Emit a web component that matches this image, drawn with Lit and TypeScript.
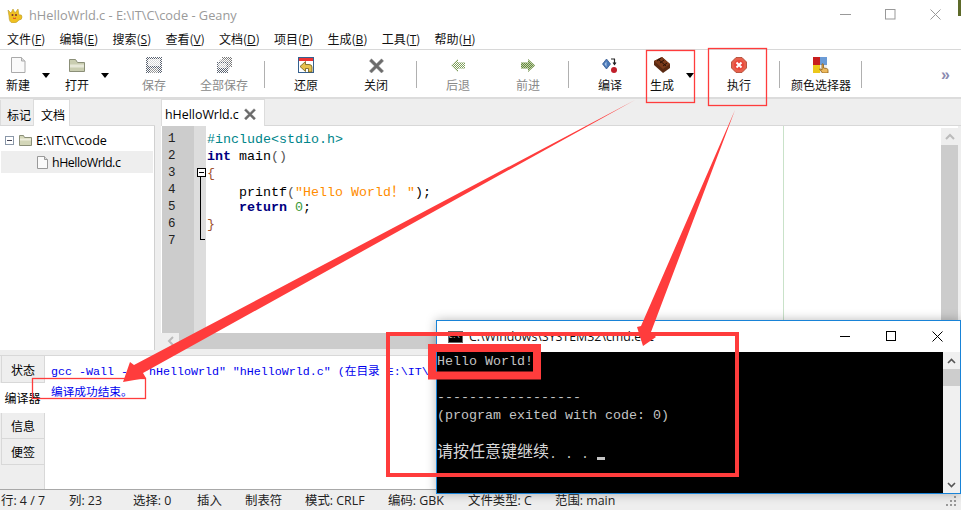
import { LitElement, html, css, svg } from "lit";
import { customElement } from "lit/decorators.js";

const ICONS: Record<string, any> = {
  page: svg`<path d="M.5.500h10l3.500 3.500v11.500H.5z" fill="#fafafa" stroke="#aaa"/><path d="M10.500.500v3.500h3.500" fill="#ddd" stroke="#aaa"/>`,
  folder: svg`<path d="M.5.500h6l2 3h7v9H.5z" fill="#c9cdb0" stroke="#8b8f78"/><path d="M1 7h14" stroke="#e7e8d8" stroke-width="3"/>`,
  save: svg`<rect x="0" y="0" width="16" height="16" fill="#5a6270"/><rect x="2" y="2" width="12" height="7" fill="#d8d8d8"/><rect x="4" y="11" width="8" height="5" fill="#999"/><rect width="16" height="16" fill="url(#dz)"/>`,
  saveall: svg`<rect x="5" y="0" width="10" height="10" fill="#777"/><rect x="2.500" y="2.500" width="10" height="10" fill="#aaa"/><rect x="0" y="5" width="11" height="11" fill="#5a6270"/><rect x="1.500" y="6" width="8" height="5" fill="#ccc"/><rect width="15" height="16" fill="url(#dz)"/>`,
  revert: svg`<rect x=".5" y=".5" width="15" height="15" fill="#fff" stroke="#36608f"/><rect x="1" y="1" width="14" height="3" fill="#e33"/><path d="M14 15V10Q14 7.500 11 7.500H7.500V4.500L2 9.500l5.500 5v-3h3V15z" fill="#e6c04c" stroke="#6b5a18" stroke-width=".8"/>`,
  close: svg`<path d="M3 1 9 7l6-6 2.500 2.500-6 6 6 6L15 18l-6-6-6 6-2.500-2.500 6-6-6-6z" fill="#6b6b6b" stroke="#8a8a8a" stroke-width=".6"/>`,
  back: svg`<path d="M0 6.500 7 0v3.500h7v6H7V13z" fill="#7f9f5a"/><path d="M0 6.500 7 0v3.500h7v6H7V13z" fill="url(#dz)"/>`,
  fwd: svg`<path d="M14 6.500 7 0v3.500H0v6h7V13z" fill="#668a3a"/><path d="M14 6.500 7 0v3.500H0v6h7V13z" fill="url(#dz)" opacity=".6"/>`,
  compile: svg`<path d="M.5 7l4-5 4 5-4 5z" fill="#4a79b8" stroke="#2b4f86" stroke-width=".7"/><path d="M2.500 7l2-2.500V10z" fill="#a8c4e6"/><circle cx="12" cy="13" r="3" fill="#c01f2a"/><path d="M9 2h4M12.500 2v5M11 5.500l1.500 2 1.500-2" stroke="#222" stroke-width="1.200" fill="none"/>`,
  brick: svg`<path d="M1 5 9 1l8 7v4l-7 5-9-8z" fill="#5a2a12"/><path d="M1 5 9 1l8 7-7 5z" fill="#7a3a1a"/><path d="M5 3l8 7M8 2l-4 3M11 4l-4 3M14 7l-4 3" stroke="#2b1206" stroke-width="1"/>`,
  stop: svg`<path d="M5 .5h6L15.500 5v6L11 15.500H5L.5 11V5z" fill="#e8604c" stroke="#a8412c" stroke-width=".8"/><circle cx="8" cy="8" r="5" fill="#e9463a"/><path d="M5.500 5.500l5 5M10.500 5.500l-5 5" stroke="#fff" stroke-width="2"/>`,
  color: svg`<rect x="0" y="0" width="7" height="8" fill="#c81e1e"/><rect x="7" y="0" width="7" height="8" fill="#6b9bd6"/><rect x="0" y="8" width="7" height="8" fill="#ecc81a"/><rect x="7" y="8" width="7" height="8" fill="#eee"/><path d="M9 7c1-.5 1.500 0 1.500 1v3l3 .5c1.500.5 1.500 1 1.500 2V16H9.500l-3-4 1 0 1.500 1z" fill="#edb95e" stroke="#8a5a16" stroke-width=".8"/>`,
};

function icon(name: string, w = 20, h = 20, vb = 0) {
  return html`<svg class="ic" width=${w} height=${h} viewBox="0 0 ${vb || w} ${vb || h}">${ICONS[name]}</svg>`;
}

type Tool =
  | { t: "tool"; label: string; w: number; ic: string; iw: number; ih: number; vb?: number; off?: boolean }
  | { t: "arrow"; w: number }
  | { t: "sep" }
  | { t: "gap"; w: number };

const TOOLS: Tool[] = [
  { t: "tool", label: "新建", w: 36, ic: "page", iw: 15, ih: 16 },
  { t: "arrow", w: 20 },
  { t: "tool", label: "打开", w: 42, ic: "folder", iw: 16, ih: 13 },
  { t: "arrow", w: 14 },
  { t: "gap", w: 7 },
  { t: "tool", label: "保存", w: 70, ic: "save", iw: 16, ih: 16, off: true },
  { t: "tool", label: "全部保存", w: 70, ic: "saveall", iw: 15, ih: 16, off: true },
  { t: "sep" },
  { t: "tool", label: "还原", w: 70, ic: "revert", iw: 16, ih: 16 },
  { t: "tool", label: "关闭", w: 70, ic: "close", iw: 15, ih: 15, vb: 18 },
  { t: "sep" },
  { t: "tool", label: "后退", w: 70, ic: "back", iw: 14, ih: 13, off: true },
  { t: "tool", label: "前进", w: 70, ic: "fwd", iw: 14, ih: 13, off: true },
  { t: "sep" },
  { t: "tool", label: "编译", w: 70, ic: "compile", iw: 16, ih: 16 },
  { t: "tool", label: "生成", w: 34, ic: "brick", iw: 18, ih: 18 },
  { t: "arrow", w: 21 },
  { t: "gap", w: 4 },
  { t: "tool", label: "执行", w: 70, ic: "stop", iw: 16, ih: 16 },
  { t: "sep" },
  { t: "tool", label: "颜色选择器", w: 70, ic: "color", iw: 16, ih: 16 },
  { t: "sep" },
];

const MENU = [
  ["文件", "F"], ["编辑", "E"], ["搜索", "S"], ["查看", "V"], ["文档", "D"],
  ["项目", "P"], ["生成", "B"], ["工具", "T"], ["帮助", "H"],
];

const STATUS: [string, number][] = [
  ["行: 4 / 7", 68], ["列: 23", 64], ["选择: 0", 64], ["插入", 48], ["制表符", 60],
  ["模式: CRLF", 83], ["编码: GBK", 80], ["文件类型: C", 87], ["范围: main", 100],
];

@customElement("app-root")
export class AppRoot extends LitElement {
  static styles = css`
    :host {
      display: block; position: relative; width: 961px; height: 510px; overflow: hidden;
      background: #fff; color: #000;
      font-family: "Open Sans", "Noto Sans CJK SC", sans-serif; font-size: 12px;
    }
    .app { display: flex; flex-direction: column; height: 510px; }
    .defs { position: absolute; width: 0; height: 0; }

    .title { height: 29px; flex: none; display: flex; align-items: center; background: #fff; position: relative; }
    .logo { margin: 0 6px 0 7px; flex: none; }
    .title-text { color: #9a9a9a; font-size: 12.8px; }
    .caps { margin-left: auto; display: flex; align-items: center; gap: 34px; padding-right: 20px; }
    .caps svg { display: block; }
    .corner { position: absolute; right: 0; top: 0; width: 3px; height: 16px; background: #5d6a2a; }

    .menu { height: 20px; flex: none; display: flex; padding-left: 7px; gap: 14.2px; border-bottom: 1px solid #d8d8d8; line-height: 19px; color: #111; font-family: "Noto Sans CJK SC", sans-serif; }
    .menu u { font-family: "Open Sans", sans-serif; }
    .menu span { white-space: nowrap; }

    .toolbar { height: 47px; flex: none; display: flex; border-bottom: 2px solid #dcdcdc; font-family: "Noto Sans CJK SC", sans-serif; }
    .tool { display: flex; flex-direction: column; align-items: center; flex: none; }
    .tool .ibox { height: 22px; margin-top: 4px; display: flex; align-items: center; justify-content: center; }
    .tool .lab { line-height: 18px; color: #111; white-space: nowrap; }
    .tool.off .lab { color: #8a8a8a; }
    .drop { flex: none; display: flex; justify-content: center; padding-top: 23px; box-sizing: border-box; }
    .drop i { display: block; width: 0; height: 0; border: 4px solid transparent; border-top: 5px solid #000; border-bottom: 0; }
    .sep { flex: none; width: 12px; box-sizing: border-box; padding: 11px 0 9px 5px; }
    .sep i { display: block; width: 1px; height: 100%; background: #b0b0b0; }
    .more { margin-left: auto; margin-right: 11px; padding-top: 16px; color: #8a8ab0; font: bold 16px "Liberation Sans", sans-serif; }

    .mid { flex: 1; display: flex; flex-direction: column; background: #eee; min-height: 0; }
    .upper { height: 251px; flex: none; display: flex; gap: 6px; }
    .side { width: 155px; flex: none; display: flex; flex-direction: column; }
    .tabs { height: 27px; flex: none; display: flex; align-items: flex-end; border-bottom: 1px solid #d8d8d8; box-sizing: border-box; font-family: "Noto Sans CJK SC", sans-serif; }
    .stab { width: 33px; height: 25px; line-height: 29px; box-sizing: border-box; border-left: 1px solid #dcdcdc; padding-left: 6px; white-space: nowrap; overflow: hidden; }
    .stab.on { width: 37px; height: 27px; background: #fff; line-height: 30px; margin-bottom: -1px; position: relative; border: 1px solid #dcdcdc; border-bottom: 0; padding-left: 7px; }
    .sbody { flex: 1; background: #fff; border-right: 1px solid #d0d0d0; padding-top: 3px; font-size: 12.6px; }
    .row { height: 22px; display: flex; align-items: center; white-space: nowrap; }
    .row.sel { background: #eee; margin: 0 1px; }
    .row svg { flex: none; }
    .row .fn { letter-spacing: -.45px; font-size: 12.4px; }
    .minus { margin: 0 5px; }
    .fold { margin-right: 4px; }
    .fileic { margin: 0 4px 0 36px; }

    .ed { flex: 1; display: flex; flex-direction: column; min-width: 0; }
    .etabs { height: 27px; flex: none; display: flex; align-items: flex-end; border-bottom: 1px solid #d8d8d8; box-sizing: border-box; }
    .etab { width: 104px; height: 27px; margin-bottom: -1px; background: #fff; border: 1px solid #dcdcdc; border-bottom: 0; box-sizing: border-box; display: flex; align-items: center; padding: 2px 0 0 3px; gap: 5px; font-size: 12.4px; position: relative; }
    .ebwrap { flex: 1; display: flex; flex-direction: column; min-height: 0; }
    .ebody { flex: 1; display: flex; min-height: 0; background: #fff; position: relative; border-right: 3px solid #eee; }
    .nums { width: 32px; flex: none; margin-left: 1px; background: #ccc; font: 12.5px/17px "Liberation Mono", monospace; padding: 5px 0 0 6px; box-sizing: border-box; color: #222; }
    .foldm { width: 12px; flex: none; background: #ddd; position: relative; }
    .fbox { position: absolute; left: 3px; top: 42px; width: 7px; height: 7px; border: 1px solid #000; background: #fff; }
    .fbox::after { content: ""; position: absolute; left: 1px; right: 1px; top: 3px; height: 1px; background: #000; }
    .fline { position: absolute; left: 6px; top: 51px; width: 5px; height: 63px; border-left: 1px solid #000; border-bottom: 1px solid #000; box-sizing: border-box; }
    .code { flex: 1; padding: 5px 0 0 1px; font: 13.33px/17px "Liberation Mono", "Noto Sans CJK SC", monospace; position: relative; }
    .code div { height: 17px; white-space: pre; }
    .kw { color: #00007f; font-weight: bold; }
    .pp { color: #00858a; }
    .brace { color: #a0522d; }
    .str { color: #ff8c00; }
    .num { color: #3a9a3a; }
    .gr { color: #555; }
    .fw { display: inline-block; width: 16px; font-family: "Noto Sans CJK SC", sans-serif; }
    .long { position: absolute; left: 577px; top: 0; bottom: 0; width: 1px; background: #c9e2c9; }
    .vs { width: 17px; flex: none; background: #eee; display: flex; flex-direction: column; margin-top: 2px; }
    .vs .cap { height: 17px; display: flex; align-items: center; justify-content: center; }
    .vs .th { flex: 1; background: #ccc; }
    .hsb { height: 16px; flex: none; display: flex; background: #eee; margin: 0 3px 1px 1px; }
    .hsb .cap { width: 17px; display: flex; align-items: center; justify-content: center; }
    .hsb .th { flex: 1; background: #ccc; margin-right: 16px; }

    .lower { flex: 1; display: flex; margin-top: 5px; border-top: 1px solid #d8d8d8; min-height: 0; }
    .mtabs { width: 44px; flex: none; display: flex; flex-direction: column; font-family: "Noto Sans CJK SC", sans-serif; }
    .mtab { height: 26px; margin-left: 1px; border: 1px solid #d8d8d8; border-right: 0; border-top: 0; box-sizing: border-box; text-align: center; line-height: 25px; }
    .mtab:first-child { height: 27px; line-height: 28px; }
    .mtab.on { height: 30px; background: #fff; margin-left: 0; line-height: 30px; margin-right: -1px; position: relative; border: 0; }
    .mbody { flex: 1; background: #fff; padding: 3px 0 0 6px; font: 11.67px/21px "Liberation Mono", monospace; color: #0000ee; border-left: 1px solid #d8d8d8; }
    .mbody div { height: 21px; white-space: pre; }
    .mz { font: 11.67px/21px "Noto Sans CJK SC", sans-serif; }

    .status { height: 21px; flex: none; background: #eee; border-top: 1px solid #a8a8a8; box-sizing: border-box; display: flex; align-items: center; padding-left: 1px; font-size: 12.4px; color: #222; white-space: nowrap; position: relative; }
    .status span { flex: none; }
    .grip { position: absolute; right: 3px; bottom: 2px; }

    .cmd { position: absolute; left: 436px; top: 320px; width: 525px; height: 174px; box-sizing: border-box; border: 1px solid #1883d7; background: #fff; box-shadow: 0 0 10px rgba(0,0,0,.28); display: flex; flex-direction: column; }
    .ctitle { height: 31px; flex: none; display: flex; align-items: center; padding-left: 11px; gap: 6px; font-size: 12.4px; color: #111; }
    .cicon { width: 15px; height: 12px; background: #000; border: 1px solid #666; border-top-width: 2px; box-sizing: border-box; color: #fff; font: 6px/8px "Liberation Mono", monospace; overflow: hidden; }
    .ccaps { margin-left: auto; display: flex; align-items: center; gap: 35px; padding-right: 17px; }
    .ccaps svg { display: block; }
    .cbody { flex: 1; display: flex; min-height: 0; }
    .term { flex: 1; background: #000; color: #c4c4c4; font: 13.33px/18px "Liberation Mono", monospace; padding-top: 1px; }
    .term div { height: 18px; white-space: pre; }
    .term .last { margin-top: -2px; }
    .zh { font: 16px/18px "Noto Sans CJK SC", sans-serif; color: #d8d8d8; vertical-align: 1px; }
    .dots { display: inline-block; width: 48px; letter-spacing: 8px; }
    .cur { display: inline-block; width: 8px; height: 3px; background: #c4c4c4; vertical-align: -2px; }
    .csb { width: 17px; flex: none; background: #f0f0f0; display: flex; flex-direction: column; justify-content: space-between; position: relative; }
    .csb .cap { height: 17px; display: flex; align-items: center; justify-content: center; }
    .csb .th { position: absolute; left: 0; right: 0; top: 17px; height: 17px; background: #cdcdcd; }

    .notes { position: absolute; left: 0; top: 0; pointer-events: none; }
    .ink { fill: #ff3c3c; }
    .line { fill: none; stroke: #ff3c3c; }
  `;

  render() {
    return html`
      <svg class="defs" width="0" height="0"><defs>
        <pattern id="dz" width="2" height="2" patternUnits="userSpaceOnUse">
          <rect width="1" height="1" fill="#fff" /><rect x="1" y="1" width="1" height="1" fill="#fff" />
        </pattern>
      </defs></svg>
      <div class="app">
        <div class="title">
          <svg class="logo" width="16" height="16" viewBox="0 0 16 16">
            <path d="M1 3l3 3 2-4 2 4 3-4 1 6q3-1 3 2t-3 3q-2 3-6 3T2 9z" fill="#f0c020" stroke="#b99a28" stroke-width=".6"/>
            <circle cx="5.500" cy="8" r="1" fill="#733"/><circle cx="9" cy="8" r="1" fill="#733"/><path d="M6 11q1.500 1 3 0" stroke="#d33" fill="none"/>
          </svg>
          <span class="title-text">hHelloWrld.c - E:\\IT\\C\\code - Geany</span>
          <div class="caps">
            <svg width="11" height="11" viewBox="0 0 11 11"><path d="M0 5.500h11" stroke="#999"/></svg>
            <svg width="11" height="11" viewBox="0 0 11 11"><rect x=".5" y=".5" width="9.500" height="9.500" fill="none" stroke="#999"/></svg>
            <svg width="11" height="11" viewBox="0 0 11 11"><path d="M.5.500l10 10m0-10-10 10" stroke="#999" fill="none"/></svg>
          </div>
          <i class="corner"></i>
        </div>
        <div class="menu">
          ${MENU.map(([a, k]) => html`<span>${a}(<u>${k}</u>)</span>`)}
        </div>
        <div class="toolbar">
          ${TOOLS.map((t) => {
            if (t.t === "sep") return html`<div class="sep"><i></i></div>`;
            if (t.t === "gap") return html`<div style="width:${t.w}px;flex:none"></div>`;
            if (t.t === "arrow") return html`<div class="drop" style="width:${t.w}px"><i></i></div>`;
            return html`<div class="tool ${t.off ? "off" : ""}" style="width:${t.w}px">
              <div class="ibox">${icon(t.ic, t.iw, t.ih, t.vb)}</div>
              <div class="lab">${t.label}</div>
            </div>`;
          })}
          <div class="more">»</div>
        </div>
        <div class="mid">
          <div class="upper">
            <div class="side">
              <div class="tabs">
                <div class="stab">标记</div>
                <div class="stab on">文档</div>
              </div>
              <div class="sbody">
                <div class="row">
                  <svg class="minus" width="9" height="9" viewBox="0 0 9 9"><rect x=".5" y=".5" width="8" height="8" fill="#fff" stroke="#8a97a8"/><path d="M2 4.500h5" stroke="#445"/></svg>
                  <svg class="fold" width="13" height="12" viewBox="0 0 13 12"><path d="M.5 1.500h4l1 2h7v8H.5z" fill="#d3d6b8" stroke="#8b8f78"/><path d="M1 5.500h11" stroke="#eeeedd" stroke-width="2"/></svg>
                  <span>E:\\IT\\C\\code</span>
                </div>
                <div class="row sel">
                  <svg class="fileic" width="11" height="13" viewBox="0 0 11 13"><path d="M.5.500h7l3 3v9H.5z" fill="#fafafa" stroke="#999"/><path d="M7.500.500v3h3" fill="#ddd" stroke="#999"/></svg>
                  <span class="fn">hHelloWrld.c</span>
                </div>
              </div>
            </div>
            <div class="ed">
              <div class="etabs">
                <div class="etab">
                  <span>hHelloWrld.c</span>
                  <svg width="12" height="12" viewBox="0 0 18 18">${ICONS.close}</svg>
                </div>
              </div>
              <div class="ebwrap">
                <div class="ebody">
                  <div class="nums">1<br />2<br />3<br />4<br />5<br />6<br />7</div>
                  <div class="foldm"><i class="fbox"></i><i class="fline"></i></div>
                  <div class="code">
                    <div><span class="pp">#include&lt;stdio.h&gt;</span></div>
                    <div><span class="kw">int</span> main<span class="gr">()</span></div>
                    <div><span class="brace">{</span></div>
                    <div>    printf<span class="gr">(</span><span class="str">"Hello World<span class="fw">！</span>"</span>);</div>
                    <div>    <span class="kw">return</span> <span class="num">0</span>;</div>
                    <div><span class="brace">}</span></div>
                    <i class="long"></i>
                  </div>
                  <div class="vs">
                    <div class="cap"><svg width="10" height="7" viewBox="0 0 10 7"><path d="M1 6l4-4 4 4" fill="none" stroke="#bbb" stroke-width="2"/></svg></div>
                    <div class="th"></div>
                  </div>
                </div>
                <div class="hsb">
                  <div class="cap"><svg width="7" height="10" viewBox="0 0 7 10"><path d="M6 1 2 5l4 4" fill="none" stroke="#bbb" stroke-width="2"/></svg></div>
                  <div class="th"></div>
                </div>
              </div>
            </div>
          </div>
          <div class="lower">
            <div class="mtabs">
              <div class="mtab">状态</div>
              <div class="mtab on">编译器</div>
              <div class="mtab">信息</div>
              <div class="mtab">便签</div>
            </div>
            <div class="mbody">
              <div>gcc -Wall -o "hHelloWrld" "hHelloWrld.c" (<span class="mz">在目录</span> E:\\IT\\</div>
              <div><span class="mz">编译成功结束。</span></div>
            </div>
          </div>
        </div>
        <div class="status">
          ${STATUS.map(([s, w]) => html`<span style="width:${w}px">${s}</span>`)}
          <svg class="grip" width="12" height="12" viewBox="0 0 12 12" fill="#999">
            <rect x="8" y="0" width="2" height="2"/><rect x="4" y="4" width="2" height="2"/><rect x="8" y="4" width="2" height="2"/>
            <rect x="0" y="8" width="2" height="2"/><rect x="4" y="8" width="2" height="2"/><rect x="8" y="8" width="2" height="2"/>
          </svg>
        </div>
      </div>

      <div class="cmd">
        <div class="ctitle">
          <div class="cicon">C:\\</div>
          <span>C:\\Windows\\SYSTEM32\\cmd.exe</span>
          <div class="ccaps">
            <svg width="11" height="11" viewBox="0 0 11 11"><path d="M0 5.500h10" stroke="#000"/></svg>
            <svg width="11" height="11" viewBox="0 0 11 11"><rect x=".5" y=".5" width="9" height="9" fill="none" stroke="#000"/></svg>
            <svg width="11" height="11" viewBox="0 0 11 11"><path d="M.5.500l10 10m0-10-10 10" stroke="#000" fill="none"/></svg>
          </div>
        </div>
        <div class="cbody">
          <div class="term"><div>Hello World!</div><div> </div><div>------------------</div><div>(program exited with code: 0)</div><div> </div><div class="last"><span class="zh">请按任意键继续</span><span class="dots">...</span><span class="cur"></span></div></div>
          <div class="csb">
            <div class="cap"><svg width="9" height="6" viewBox="0 0 9 6"><path d="M1 5l3.500-3.500L8 5" fill="none" stroke="#555" stroke-width="1.600"/></svg></div>
            <i class="th"></i>
            <div class="cap"><svg width="9" height="6" viewBox="0 0 9 6"><path d="M1 1l3.500 3.500L8 1" fill="none" stroke="#555" stroke-width="1.600"/></svg></div>
          </div>
        </div>
      </div>

      <svg class="notes" width="961" height="510" viewBox="0 0 961 510">
        <rect class="line" x="646.500" y="50.500" width="48" height="52" stroke-width="1.300"/>
        <rect class="line" x="708.500" y="48.500" width="58" height="57" stroke-width="1.300"/>
        <rect class="line" x="32.500" y="378.500" width="113" height="20" stroke-width="1.300"/>
        <rect class="line" x="388" y="334" width="349" height="141" stroke-width="4"/>
        <rect class="line" x="432" y="348" width="105" height="27.500" stroke-width="8"/>
        <polygon class="ink" points="635,100 143,373 146,378 123,382 130,362 134,365"/>
        <polygon class="ink" points="735,110 651,332 656,337 643,346 637,327 641,326"/>
      </svg>
    `;
  }
}
